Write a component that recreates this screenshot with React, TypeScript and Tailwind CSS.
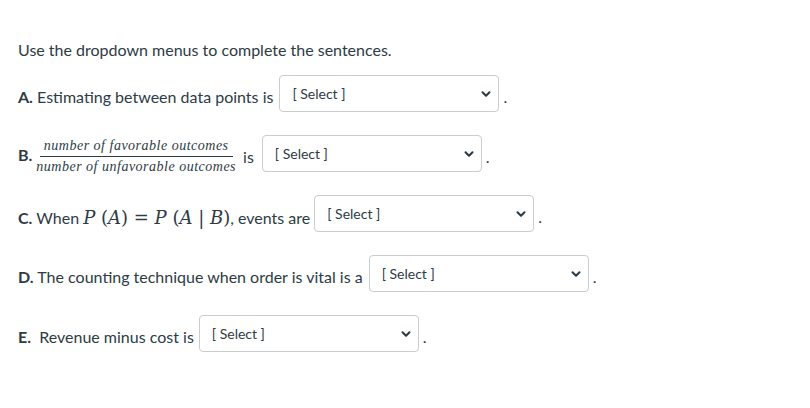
import { ChevronDown } from 'lucide-react';

function Dropdown({ width = 'w-[220px]' }: { width?: string }) {
  return (
    <div
      className={`${width} h-[37px] flex items-center justify-between pl-[12px] pr-[5px] border border-[#c7cdd1] rounded-[4px] bg-white shrink-0`}
    >
      <span className="text-[14px] text-[#2d3b45] -mt-[1px]">[ Select ]</span>
      <ChevronDown className="w-[14px] h-[14px] text-[#2d3b45]" strokeWidth={3.5} />
    </div>
  );
}

const mathFont = { fontFamily: '"DejaVu Serif", "Liberation Serif", serif' };
const fracFont = { fontFamily: '"Liberation Serif", "DejaVu Serif", serif' };

export default function App() {
  return (
    <div
      className="w-[810px] h-[408px] bg-white text-[#2d3b45] text-[16px] pl-[18px] pt-[38px]"
      style={{ fontFamily: 'Lato, "Noto Sans", sans-serif' }}
    >
      <p className="leading-[24px]">Use the dropdown menus to complete the sentences.</p>

      <div className="mt-[13px] flex flex-col gap-[23px]">
        {/* A */}
        <div className="flex items-center h-[37px]">
          <span className="pt-[7px] mr-[6px]">
            <b>A.</b> Estimating between data points is
          </span>
          <Dropdown />
          <span className="pt-[7px] ml-[4px]">.</span>
        </div>

        {/* B */}
        <div className="flex items-center h-[37px]">
          <span className="pt-[3px] mr-[4px]">
            <b>B.</b>
          </span>
          <span className="inline-flex flex-col items-center pt-[6px] mr-[7px]" style={fracFont}>
            <span className="italic text-[14px] leading-[18px] tracking-[0.5px] px-[4px] border-b border-[#2d3b45] pb-[1px]">
              number of favorable outcomes
            </span>
            <span className="italic text-[14px] leading-[19px] tracking-[0.5px]">
              number of unfavorable outcomes
            </span>
          </span>
          <span className="pt-[7px] mr-[8px]">is</span>
          <Dropdown />
          <span className="pt-[7px] ml-[4px]">.</span>
        </div>

        {/* C */}
        <div className="flex items-center h-[37px]">
          <span className="pt-[7px] mr-[4px]">
            <b>C.</b> When{' '}
            <span className="text-[18px]" style={mathFont}>
              <i>P</i> (<i>A</i>) = <i>P</i> (<i>A</i> | <i>B</i>)
            </span>
            , events are
          </span>
          <Dropdown />
          <span className="pt-[7px] ml-[4px]">.</span>
        </div>

        {/* D */}
        <div className="flex items-center h-[37px]">
          <span className="pt-[7px] mr-[6px]">
            <b>D.</b> The counting technique when order is vital is a
          </span>
          <Dropdown />
          <span className="pt-[7px] ml-[4px]">.</span>
        </div>

        {/* E */}
        <div className="flex items-center h-[37px]">
          <span className="pt-[7px] mr-[5px] whitespace-pre">
            <b>E.</b>{'  '}Revenue minus cost is
          </span>
          <Dropdown />
          <span className="pt-[7px] ml-[4px]">.</span>
        </div>
      </div>
    </div>
  );
}
